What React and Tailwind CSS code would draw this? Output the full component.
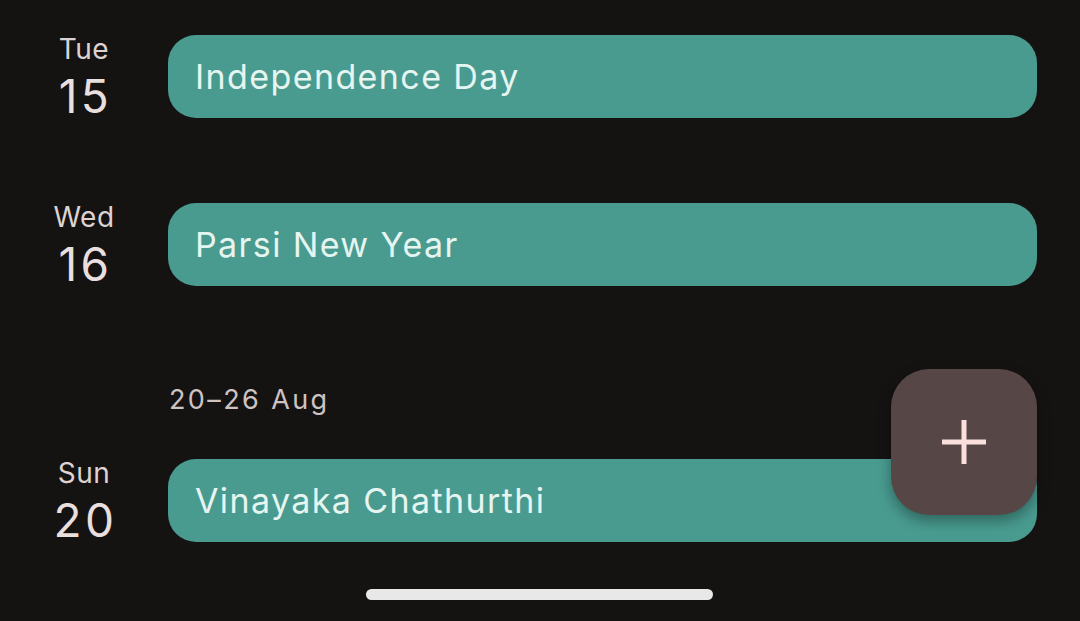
import React from "react";

const font = { fontFamily: "Inter, Roboto, 'Noto Sans', sans-serif" };

function Row({ day, num, title, className = "" }) {
  return (
    <div className={`flex items-start h-[83px] ${className}`}>
      <div className="w-[168px] flex flex-col items-center text-[#e8dfde]">
        <div className="text-[28px] leading-[28px] tracking-[0.5px] text-[#ddd3d2]">{day}</div>
        <div className="text-[46px] leading-[46px] mt-[10px] tracking-[3.5px] pl-[3px]">{num}</div>
      </div>
      <div className="flex-1 mr-[43px] h-[83px] rounded-[28px] bg-[#499b90] flex items-center pl-[27px]">
        <span className="text-[34px] text-[#e6f5f0] tracking-[1.4px]">{title}</span>
      </div>
    </div>
  );
}

export default function App() {
  return (
    <div className="relative w-[1080px] h-[621px] bg-[#151312] overflow-hidden" style={font}>
      <div className="flex flex-col pt-[35px]">
        <Row day="Tue" num="15" title="Independence Day" />
        <Row day="Wed" num="16" title="Parsi New Year" className="mt-[85px]" />
        <div className="pl-[169px] mt-[99px] text-[27px] leading-[30px] tracking-[2.4px] text-[#cdc3c2]">20–26 Aug</div>
        <Row day="Sun" num="20" title="Vinayaka Chathurthi" className="mt-[44px]" />
      </div>
      <button className="absolute left-[891px] top-[369px] w-[146px] h-[146px] rounded-[38px] bg-[#564746] flex items-center justify-center shadow-[0_6px_14px_rgba(0,0,0,0.35)]">
        <svg width="44" height="44" viewBox="0 0 44 44">
          <rect x="19.5" y="0" width="5" height="44" fill="#fbdfdd" />
          <rect x="0" y="19.5" width="44" height="5" fill="#fbdfdd" />
        </svg>
      </button>
      <div className="absolute left-[366px] top-[589px] w-[347px] h-[11px] rounded-full bg-[#e8e8e8]" />
    </div>
  );
}
